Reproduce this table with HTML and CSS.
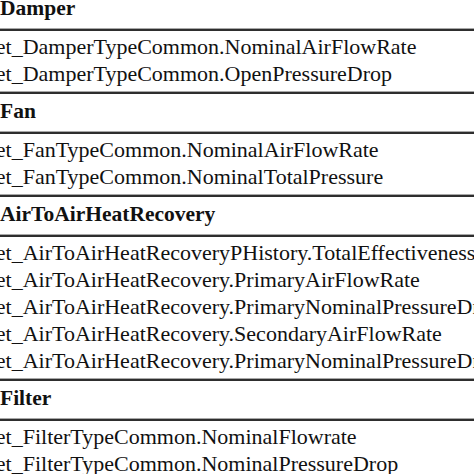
FILE: index.html
```html
<!DOCTYPE html>
<html>
<head>
<meta charset="utf-8">
<link rel="stylesheet" href="styles.css">
</head>
<body>
<div class="table">
  <div class="head first">Damper</div>
  <div class="rule"></div>
  <div class="rows">
    <div class="row">Pset_DamperTypeCommon.NominalAirFlowRate</div>
    <div class="row">Pset_DamperTypeCommon.OpenPressureDrop</div>
  </div>
  <div class="rule"></div>
  <div class="head">Fan</div>
  <div class="rule"></div>
  <div class="rows">
    <div class="row">Pset_FanTypeCommon.NominalAirFlowRate</div>
    <div class="row">Pset_FanTypeCommon.NominalTotalPressure</div>
  </div>
  <div class="rule"></div>
  <div class="head">AirToAirHeatRecovery</div>
  <div class="rule"></div>
  <div class="rows">
    <div class="row">Pset_AirToAirHeatRecoveryPHistory.TotalEffectiveness</div>
    <div class="row">Pset_AirToAirHeatRecovery.PrimaryAirFlowRate</div>
    <div class="row">Pset_AirToAirHeatRecovery.PrimaryNominalPressureDrop</div>
    <div class="row">Pset_AirToAirHeatRecovery.SecondaryAirFlowRate</div>
    <div class="row">Pset_AirToAirHeatRecovery.PrimaryNominalPressureDrop</div>
  </div>
  <div class="rule"></div>
  <div class="head">Filter</div>
  <div class="rule"></div>
  <div class="rows">
    <div class="row">Pset_FilterTypeCommon.NominalFlowrate</div>
    <div class="row">Pset_FilterTypeCommon.NominalPressureDrop</div>
  </div>
</div>
</body>
</html>
```
FILE: styles.css
```css
html, body {
  margin: 0;
  padding: 0;
  background: #ffffff;
  overflow: hidden;
  width: 474px;
  height: 474px;
}
.table {
  font-family: "Liberation Serif", "Times New Roman", serif;
  color: #111111;
  width: 474px;
  overflow: hidden;
}
.head {
  font-weight: bold;
  font-size: 21.5px;
  height: 35px;
  line-height: 35px;
  padding-bottom: 2px;
  white-space: nowrap;
}
.head.first {
  margin-top: -9px;
}
.rule {
  height: 0;
  border-top: 1px solid #a8a8a8;
  border-bottom: 2px solid #2e2e2e;
}
.rows {
  padding: 2px 0 4px;
}
.row {
  font-size: 22px;
  height: 27px;
  line-height: 27px;
  white-space: nowrap;
  margin-left: -25px;
}
```
